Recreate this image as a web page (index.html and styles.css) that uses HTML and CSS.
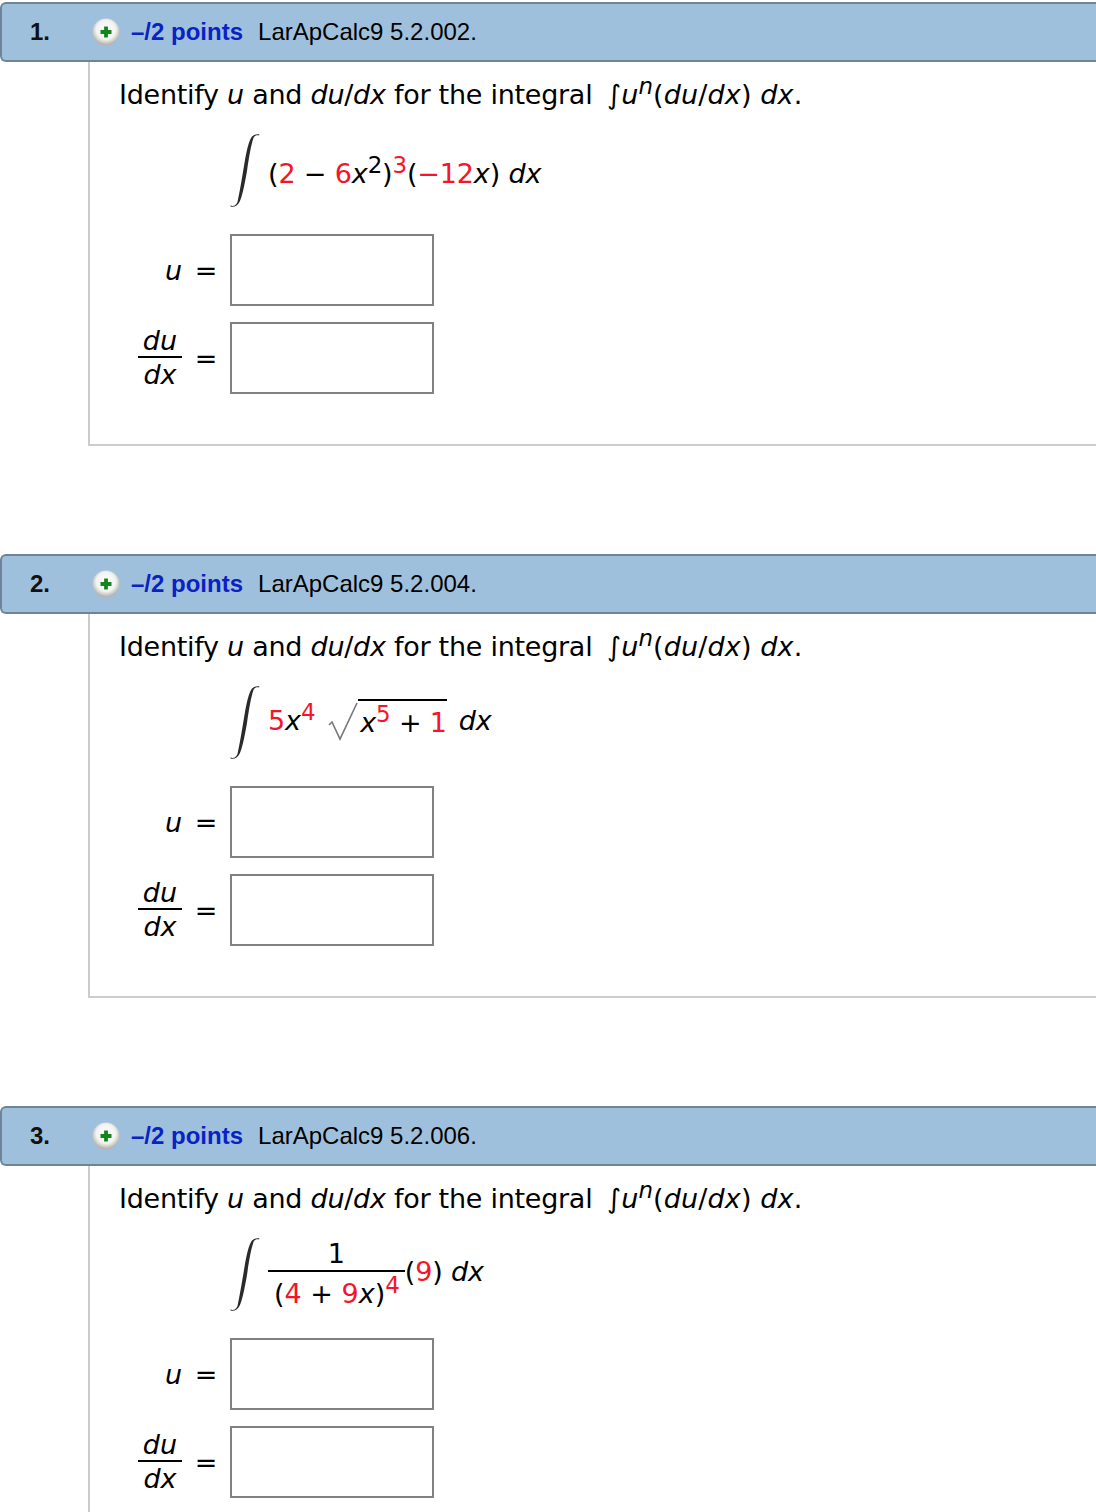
FILE: index.html
```html
<!DOCTYPE html>
<html lang="en">
<head>
<meta charset="utf-8">
<title>Questions</title>
<link rel="stylesheet" href="styles.css">
</head>
<body>
<main class="page">

<section class="question">
  <header class="qhead">
    <span class="qnum">1.</span>
    <svg class="plus" viewBox="0 0 28 28" aria-hidden="true"><use href="#plus-icon"/></svg>
    <span class="points">–/2 points</span>
    <span class="qref">LarApCalc9 5.2.002.</span>
  </header>
  <div class="qbody">
    <p class="prompt"><span class="lead">Identify <i>u</i> and <i>du</i>/<i>dx</i> for the integral</span> <span class="inline-form">∫<i>u</i><sup><i>n</i></sup>(<i>du</i>/<i>dx</i>) <i>dx</i>.</span></p>
    <div class="formula f1">
      <svg class="integral" viewBox="0 0 30 74" aria-hidden="true"><use href="#int-icon"/></svg>
      <span class="expr">(<b>2</b> − <b>6</b><i>x</i><sup>2</sup>)<sup class="r">3</sup>(<b>−12</b><i>x</i>) <i>dx</i></span>
    </div>
    <div class="answer a1"><span class="term"><i>u</i></span><span class="eq">=</span><span class="box"></span></div>
    <div class="answer"><span class="term frac"><i>du</i><i class="den">dx</i></span><span class="eq">=</span><span class="box"></span></div>
  </div>
</section>

<section class="question">
  <header class="qhead">
    <span class="qnum">2.</span>
    <svg class="plus" viewBox="0 0 28 28" aria-hidden="true"><use href="#plus-icon"/></svg>
    <span class="points">–/2 points</span>
    <span class="qref">LarApCalc9 5.2.004.</span>
  </header>
  <div class="qbody">
    <p class="prompt"><span class="lead">Identify <i>u</i> and <i>du</i>/<i>dx</i> for the integral</span> <span class="inline-form">∫<i>u</i><sup><i>n</i></sup>(<i>du</i>/<i>dx</i>) <i>dx</i>.</span></p>
    <div class="formula f2">
      <svg class="integral" viewBox="0 0 30 74" aria-hidden="true"><use href="#int-icon"/></svg>
      <span class="expr"><b>5</b><i>x</i><sup class="r">4</sup></span>
      <svg class="radical" viewBox="0 0 30 40" aria-hidden="true"><path d="M1 23 L4 20 L12 37 L29 1" fill="none" stroke="#777" stroke-width="1.6"/></svg>
      <span class="radicand"><i>x</i><sup class="r">5</sup> + <b>1</b></span>
      <span class="expr dx"><i>dx</i></span>
    </div>
    <div class="answer a1"><span class="term"><i>u</i></span><span class="eq">=</span><span class="box"></span></div>
    <div class="answer"><span class="term frac"><i>du</i><i class="den">dx</i></span><span class="eq">=</span><span class="box"></span></div>
  </div>
</section>

<section class="question">
  <header class="qhead">
    <span class="qnum">3.</span>
    <svg class="plus" viewBox="0 0 28 28" aria-hidden="true"><use href="#plus-icon"/></svg>
    <span class="points">–/2 points</span>
    <span class="qref">LarApCalc9 5.2.006.</span>
  </header>
  <div class="qbody">
    <p class="prompt"><span class="lead">Identify <i>u</i> and <i>du</i>/<i>dx</i> for the integral</span> <span class="inline-form">∫<i>u</i><sup><i>n</i></sup>(<i>du</i>/<i>dx</i>) <i>dx</i>.</span></p>
    <div class="formula f3">
      <svg class="integral" viewBox="0 0 30 74" aria-hidden="true"><use href="#int-icon"/></svg>
      <span class="bigfrac"><span class="num">1</span><span class="den2">(<b>4</b> + <b>9</b><i>x</i>)<sup class="r">4</sup></span></span>
      <span class="expr">(<b>9</b>) <i>dx</i></span>
    </div>
    <div class="answer a1"><span class="term"><i>u</i></span><span class="eq">=</span><span class="box"></span></div>
    <div class="answer"><span class="term frac"><i>du</i><i class="den">dx</i></span><span class="eq">=</span><span class="box"></span></div>
  </div>
</section>

</main>
<svg class="defs" aria-hidden="true">
  <defs>
    <radialGradient id="disc" cx="50%" cy="42%" r="55%">
      <stop offset="0" stop-color="#ffffff"/>
      <stop offset="0.65" stop-color="#f2f2f0"/>
      <stop offset="1" stop-color="#b4b5b1"/>
    </radialGradient>
    <symbol id="plus-icon" viewBox="0 0 28 28">
      <circle cx="14" cy="14" r="13.5" fill="url(#disc)"/>
      <path d="M14 8.5v11M8.5 14h11" stroke="#12861c" stroke-width="3.8" fill="none"/>
    </symbol>
    <symbol id="int-icon" viewBox="0 0 30 74">
      <path d="M0.5 72.5 C3 73.5 6 73 7.5 69 C9.5 60 12 45 14.5 30 C16.5 18 19 7 22 3.5 C24 1.5 27 1 29.5 1.5 L29 2.5 C26 2 24.5 3 23.5 5 C21 12 19 24 17 38 C14.5 52 12 64 9.5 69 C7.5 73 4 74.5 0.5 73.5 Z" fill="#2a2a2a"/>
    </symbol>
  </defs>
</svg>
</body>
</html>
```
FILE: styles.css
```css
html, body {
  margin: 0;
  padding: 0;
  background: #fff;
  color: #000;
}
body {
  height: 1512px;
  overflow: hidden;
}
.defs {
  width: 0;
  height: 0;
  display: block;
}
.page {
  padding-top: 2px;
  display: flex;
  flex-direction: column;
  gap: 108px;
}
.qhead {
  height: 56px;
  background: #9fc0dc;
  border: 2px solid #6f8499;
  border-right: 0;
  border-radius: 6px 0 0 6px;
  display: flex;
  align-items: center;
  font-family: "Liberation Sans", Arial, sans-serif;
  font-size: 24px;
}
.qnum {
  font-weight: 700;
  color: #111;
  width: 90px;
  padding-left: 28px;
  box-sizing: border-box;
}
.plus {
  width: 28px;
  height: 28px;
  flex: none;
}
.points {
  color: #0a22c4;
  font-weight: 700;
  margin-left: 11px;
}
.qref {
  margin-left: 15px;
}
.qbody {
  margin-left: 88px;
  height: 382px;
  border-left: 2px solid #ccc;
  border-bottom: 2px solid #ccc;
  font-family: "DejaVu Sans", Verdana, sans-serif;
  font-size: 27px;
}
.prompt {
  margin: 0;
  padding: 13px 0 0 29px;
  line-height: 40px;
  white-space: nowrap;
}
.lead {
  letter-spacing: -0.27px;
}
.inline-form {
  margin-left: 6px;
  letter-spacing: 0.13px;
}
sup {
  font-size: 0.85em;
  line-height: 0;
  vertical-align: 0.42em;
}
b {
  color: #f5142a;
  font-weight: 400;
}
.r {
  color: #f5142a;
}
.formula {
  display: flex;
  align-items: center;
  margin-left: 140px;
  height: 78px;
  margin-top: 16px;
  white-space: nowrap;
}
.integral {
  width: 30px;
  height: 74px;
  flex: none;
  margin-right: 8px;
}
.expr {
  line-height: 40px;
  letter-spacing: -0.15px;
}
.f1 .expr {
  margin-top: 8px;
}
.f2 .expr {
  margin-bottom: 2px;
}
.f3 .expr {
  margin-bottom: 4px;
}
.radical {
  width: 30px;
  height: 40px;
  flex: none;
  margin-left: 13px;
}
.radicand {
  border-top: 2px solid #000;
  line-height: 44px;
  padding-left: 2px;
  letter-spacing: -0.2px;
}
.dx {
  margin-left: 12px;
}
.bigfrac {
  display: inline-flex;
  flex-direction: column;
  align-items: center;
  margin-bottom: -6px;
}
.num {
  line-height: 32px;
  border-bottom: 2px solid #000;
  align-self: stretch;
  text-align: center;
}
.den2 {
  line-height: 44px;
  padding: 0 5px 0 6px;
}
.answer {
  display: flex;
  align-items: center;
  margin-left: 48px;
  height: 72px;
  margin-top: 16px;
}
.a1 {
  margin-top: 25px;
}
.term {
  width: 44px;
  text-align: right;
  flex: none;
}
.frac {
  display: flex;
  flex-direction: column;
  align-items: center;
  line-height: 31px;
}
.den {
  display: block;
  line-height: 33px;
  border-top: 2px solid #000;
  align-self: stretch;
  text-align: center;
}
.eq {
  width: 48px;
  text-align: center;
  flex: none;
}
.box {
  width: 204px;
  height: 72px;
  box-sizing: border-box;
  border: 2px solid #808080;
  background: #fff;
  flex: none;
}
```
